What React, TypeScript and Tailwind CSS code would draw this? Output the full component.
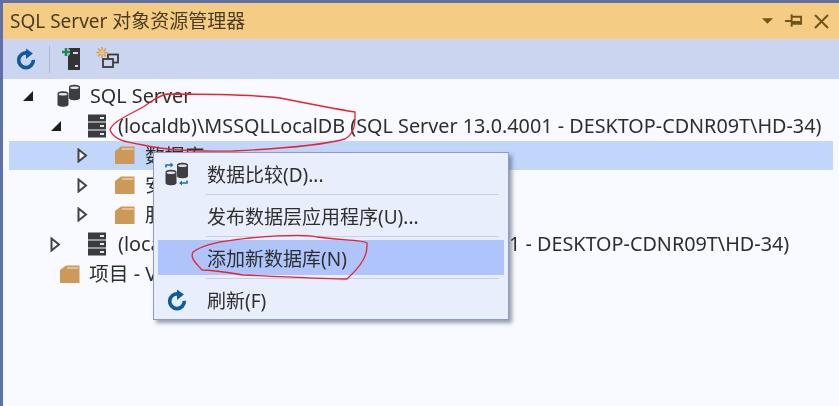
import React from "react";

const FONT = "font-['Noto_Sans','Noto_Sans_CJK_SC',sans-serif]";

function Refresh({ size = 24 }: { size?: number }) {
  return (
    <svg width={size} height={size} viewBox="0 0 24 24" fill="none">
      <path d="M13.500 5.500A8 8 0 1 0 20 13" stroke="#0e5a9c" strokeWidth="4" />
      <path d="M12 0.500 L19.500 6 L12 12 Z" fill="#0e5a9c" />
    </svg>
  );
}

function Folder() {
  return (
    <svg width="22" height="20" viewBox="0 0 22 20">
      <path d="M1 6 L7 1.500 H20.500 V19 H1 Z" fill="#cb9a58" />
      <path d="M8 3 H19.500 V5 H8 Z" fill="#e4c190" />
    </svg>
  );
}

function Server() {
  return (
    <svg width="20" height="24" viewBox="0 0 20 24">
      <rect x="1" y="0.500" width="18" height="7" fill="#3b3b3f" />
      <rect x="1" y="8.500" width="18" height="7" fill="#3b3b3f" />
      <rect x="1" y="16.500" width="18" height="7" fill="#3b3b3f" />
      <rect x="13" y="3" width="4" height="2" fill="#e8e8e8" />
      <rect x="13" y="11" width="4" height="2" fill="#e8e8e8" />
      <rect x="13" y="19" width="4" height="2" fill="#e8e8e8" />
    </svg>
  );
}

function Db({ x, y }: { x: number; y: number }) {
  return (
    <g transform={`translate(${x} ${y})`}>
      <path d="M0 3C0 0 11 0 11 3V14C11 17 0 17 0 14Z" fill="#3d3d42" />
      <path d="M1 3.500C1 2 10 2 10 3.500C10 5.500 1 5.500 1 3.500Z" fill="#dfe3ee" />
    </g>
  );
}

function Dbs() {
  return (
    <svg width="24" height="24" viewBox="0 0 24 24">
      <Db x={12} y={0} />
      <Db x={0.500} y={6.500} />
    </svg>
  );
}

function Compare() {
  return (
    <svg width="24" height="24" viewBox="0 0 24 24">
      <Db x={12} y={0} />
      <Db x={0.500} y={7} />
      <path d="M1 5.500V3H6" stroke="#1c70b4" strokeWidth="1.600" fill="none" />
      <path d="M5.500 0.500L8.500 3L5.500 5.500Z" fill="#1c70b4" />
      <path d="M22 18.500V21H16" stroke="#1c70b4" strokeWidth="1.600" fill="none" />
      <path d="M17 18.500L14 21L17 23.500Z" fill="#1c70b4" />
    </svg>
  );
}

function Open() {
  return (
    <svg width="11" height="15" viewBox="0 0 11 15">
      <path d="M1.500 1.500L9 7.500L1.500 13.500Z" fill="#f9faff" stroke="#444" strokeWidth="2" />
    </svg>
  );
}

function Expanded() {
  return (
    <svg width="12" height="12" viewBox="0 0 12 12">
      <path d="M11 1V11H1Z" fill="#1e1e1e" />
    </svg>
  );
}

function Row({ pl, arrow, icon, children, selected, iconPl = 5 }: { pl: number; arrow?: React.ReactNode; icon: React.ReactNode; children?: React.ReactNode; selected?: boolean; iconPl?: number }) {
  return (
    <div className={`flex h-[29.6px] items-center whitespace-nowrap ${selected ? "bg-[#c2d5fb]" : ""}`} style={{ paddingLeft: pl }}>
      <span className="flex w-[32px] shrink-0 items-center">{arrow}</span>
      <span className="flex w-[36px] shrink-0 items-center" style={{ paddingLeft: iconPl }}>{icon}</span>
      {children}
    </div>
  );
}

function MenuItem({ icon, children, active }: { icon?: React.ReactNode; children: React.ReactNode; active?: boolean }) {
  return (
    <div className={`flex h-[35px] items-center ${active ? "bg-[#aec4fb]" : ""}`}>
      <span className="flex w-[49px] shrink-0 justify-center pr-[12px]">{icon}</span>
      <span className="pt-[3px]">{children}</span>
    </div>
  );
}

function Sep() {
  return <div className="my-[3px] ml-[48px] mr-[5px] h-[1px] bg-[#c5cfe6]" />;
}

export default function App() {
  return (
    <div className={`relative h-[406px] w-[839px] overflow-hidden border-l-[3px] border-t-[3px] border-l-[#5f70a8] border-t-[#5f70a8] bg-[#f9faff] text-[19.8px] leading-none text-[#2e2e2e] blur-[0.4px] ${FONT}`}>
      <div className="flex h-[36px] items-center justify-between bg-[#f5cc84] pl-[7px] pr-[10px] text-[19px] text-[#4a3b22]">
        <span>SQL Server 对象资源管理器</span>
        <div className="flex items-center gap-[11px]">
          <svg width="13" height="8" viewBox="0 0 14 8"><path d="M1 1H13L7 7Z" fill="#705518" /></svg>
          <svg width="18" height="14" viewBox="0 0 19 14" fill="none" stroke="#705518" strokeWidth="2"><path d="M0 7H6M7 2.500H17V10H7ZM7 0V13M8 8H17" /></svg>
          <svg width="15" height="15" viewBox="0 0 15 15" fill="none" stroke="#705518" strokeWidth="2"><path d="M1 1L14 14M14 1L1 14" /></svg>
        </div>
      </div>
      <div className="flex h-[40px] items-center bg-[#ccd5f0] pl-[12px]">
        <Refresh size={22} />
        <div className="ml-[12px] h-[27px] w-[1px] bg-[#a9b8d6]" />
        <svg className="ml-[12px]" width="20" height="24" viewBox="0 0 20 24">
          <path d="M6 1H18V23H6Z" fill="#333" />
          <rect x="11" y="5" width="5" height="2" fill="#ccd5f0" />
          <rect x="13" y="18" width="3" height="2" fill="#ccd5f0" />
          <path d="M0 5H8M4 1V9" stroke="#ccd5f0" strokeWidth="5" />
          <path d="M0 5H8M4 1V9" stroke="#1f8a4c" strokeWidth="2.600" />
        </svg>
        <svg className="ml-[14px]" width="24" height="24" viewBox="0 0 24 24">
          <g stroke="#d99a3a" strokeWidth="1.500">
            <path d="M6 0V11M0.500 5.500H11.500M2 1.500L10 9.500M10 1.500L2 9.500" />
          </g>
          <circle cx="6" cy="5.500" r="2.500" fill="#f1c173" />
          <rect x="12" y="7.500" width="10" height="8" fill="#ccd5f0" stroke="#3b3b3b" strokeWidth="1.800" />
          <rect x="7" y="12" width="10" height="8" fill="#ccd5f0" stroke="#3b3b3b" strokeWidth="1.800" />
        </svg>
      </div>
      <div className="pt-[2.500px] pl-[6px] pr-[6px]">
        <Row pl={13} arrow={<Expanded />} icon={<Dbs />} iconPl={3}>SQL Server</Row>
        <Row pl={41} arrow={<Expanded />} icon={<Server />}>(localdb)\MSSQLLocalDB (SQL Server 13.0.4001 - DESKTOP-CDNR09T\HD-34)</Row>
        <Row pl={68} arrow={<Open />} icon={<Folder />} selected>数据库</Row>
        <Row pl={68} arrow={<Open />} icon={<Folder />}>安全性</Row>
        <Row pl={68} arrow={<Open />} icon={<Folder />}>服务器对象</Row>
        <Row pl={41} arrow={<Open />} icon={<Server />}>(localdb)\ProjectsV13 (SQL Server 13.0.4001 - DESKTOP-CDNR09T\HD-34)</Row>
        <div className="flex h-[29.6px] items-center whitespace-nowrap pl-[50px]">
          <span className="flex w-[30px] shrink-0 items-center"><Folder /></span>
          项目 - VisualStudio
        </div>
      </div>
      <div className="absolute left-[150px] top-[149px] w-[356px] border border-[#8c9cc0] bg-[#e9eefc] px-[4px] pt-[3px] pb-[2px] text-[19px] shadow-[3px_3px_4px_rgba(70,80,110,0.55)]">
        <MenuItem icon={<Compare />}>数据比较(D)...</MenuItem>
        <Sep />
        <MenuItem>发布数据层应用程序(U)...</MenuItem>
        <Sep />
        <MenuItem active>添加新数据库(N)</MenuItem>
        <Sep />
        <MenuItem icon={<Refresh size={22} />}>刷新(F)</MenuItem>
      </div>
      <svg className="absolute left-[-3px] top-[-3px]" width="839" height="406" fill="none" stroke="#e8232f" strokeWidth="1.3">
        <path d="M143 107C125 117 112 122 110 130C114 140 125 142 143 145C165 150 190 152 233 151C275 149 320 146 345 139C356 133 355 120 355 112C330 108 300 102 280 98C255 95 220 94 167 94C155 97 150 103 143 107" />
        <path d="M202 270C195 262 190 258 193 252C205 243 225 241 250 238C285 235 310 235 317 237C340 240 365 240 367 243C368 255 362 265 347 279C325 279 290 277 243 275C225 272 210 270 202 270" />
      </svg>
    </div>
  );
}
